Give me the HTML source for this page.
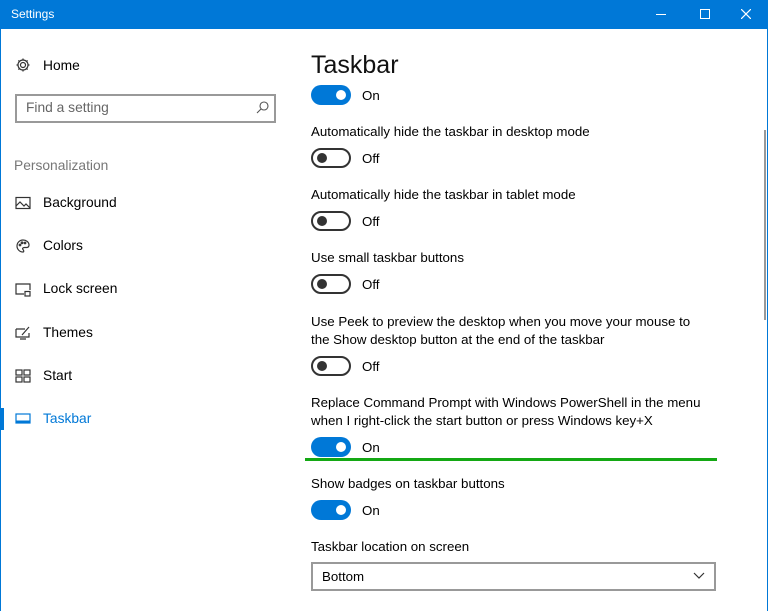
<!DOCTYPE html>
<html><head><style>
*{margin:0;padding:0;box-sizing:border-box}
body{width:768px;height:611px;background:#fff;font-family:"Liberation Sans",sans-serif;position:relative;overflow:hidden;color:#000}
.a{position:absolute;white-space:nowrap}
.t{font-size:13.3px;line-height:16px}
.tg{position:absolute;left:311px;width:40px;height:20px;border-radius:10px}
.on{background:#0078d7}
.on::after{content:"";position:absolute;right:5px;top:5px;width:10px;height:10px;border-radius:5px;background:#fff}
.off{border:2px solid #333}
.off::after{content:"";position:absolute;left:4px;top:3px;width:10px;height:10px;border-radius:5px;background:#333}
.lbl{left:362px;font-size:13.3px}
.nav{left:43px;font-size:13.8px}
.ic{position:absolute;left:15px}
</style></head><body>
<div class="a" style="left:0;top:0;width:768px;height:29px;background:#0078d7"></div>
<div class="a" style="left:11px;top:7px;color:#fff;font-size:12px">Settings</div>
<div class="a" style="left:656px;top:14px;width:10px;height:1px;background:#fff"></div>
<div class="a" style="left:700px;top:9px;width:10px;height:10px;border:1px solid #fff"></div>
<svg class="a" style="left:741px;top:9px" width="10" height="10" viewBox="0 0 10 10" stroke="#fff" stroke-width="1.2"><path d="M0 0l10 10M10 0L0 10"/></svg>
<div class="a" style="left:0;top:29px;width:1px;height:582px;background:#0078d7"></div>
<div class="a" style="left:767px;top:29px;width:1px;height:582px;background:#0078d7"></div>
<div class="a" style="left:764px;top:130px;width:2px;height:190px;background:#999"></div>

<svg class="ic" style="top:57px" width="16" height="16" viewBox="0 0 16 16" fill="none" stroke="#333" stroke-width="1.2"><circle cx="8" cy="8" r="2.5"/><path d="M8 1.5v2M8 12.5v2M1.5 8h2M12.5 8h2M3.4 3.4l1.4 1.4M11.2 11.2l1.4 1.4M3.4 12.6l1.4-1.4M11.2 4.8l1.4-1.4"/><circle cx="8" cy="8" r="5"/></svg>
<div class="a nav" style="top:58px">Home</div>
<div class="a" style="left:15px;top:94px;width:261px;height:29px;border:2px solid #999"></div>
<div class="a" style="left:26px;top:100px;font-size:13.8px;color:#666">Find a setting</div>
<svg class="a" style="left:256px;top:101px" width="13" height="13" viewBox="0 0 13 13" fill="none" stroke="#555" stroke-width="1.1"><circle cx="8" cy="5" r="4"/><path d="M5 8l-4 4"/></svg>
<div class="a" style="left:14px;top:158px;font-size:13.8px;color:#777">Personalization</div>

<svg class="ic" style="top:196px" width="16" height="14" viewBox="0 0 16 14" fill="none" stroke="#333" stroke-width="1.2"><rect x="1" y="1.5" width="14" height="11"/><path d="M1 10l4-4 4 4 2-2 4 4"/></svg>
<div class="a nav" style="top:195px">Background</div>
<svg class="ic" style="top:238px" width="16" height="16" viewBox="0 0 16 16" fill="none" stroke="#333" stroke-width="1.2"><path d="M8 2a6 6 0 1 0 0 12c1 0 1-1.5 0-2.5s0-2 1.5-2H12a2.5 2.5 0 0 0 2-2.5C14 4 11 2 8 2z"/><circle cx="5" cy="7" r=".8"/><circle cx="7" cy="4.8" r=".8"/><circle cx="10" cy="5" r=".8"/></svg>
<div class="a nav" style="top:238px">Colors</div>
<svg class="ic" style="top:283px" width="16" height="14" viewBox="0 0 16 14" fill="none" stroke="#333" stroke-width="1.2"><path d="M9 11H1V1h14v6"/><rect x="10" y="8.5" width="5" height="4.5"/></svg>
<div class="a nav" style="top:281px">Lock screen</div>
<svg class="ic" style="top:325px" width="16" height="16" viewBox="0 0 16 16" fill="none" stroke="#333" stroke-width="1.2"><path d="M1 4h9M1 4v8h13V8M5 14h6M7 10l7-8"/></svg>
<div class="a nav" style="top:325px">Themes</div>
<svg class="ic" style="top:369px" width="16" height="14" viewBox="0 0 16 14" fill="none" stroke="#333" stroke-width="1.2"><rect x="1" y="1" width="6" height="5"/><rect x="9" y="1" width="6" height="5"/><rect x="1" y="8" width="6" height="5"/><rect x="9" y="8" width="6" height="5"/></svg>
<div class="a nav" style="top:368px">Start</div>
<div class="a" style="left:0;top:408px;width:4px;height:22px;background:#0078d7"></div>
<svg class="ic" style="top:413px" width="16" height="12" viewBox="0 0 16 12" fill="none" stroke="#0078d7" stroke-width="1.2"><rect x="1" y="1" width="14" height="9"/><path d="M1 8.5h14" stroke-width="2"/></svg>
<div class="a nav" style="top:411px;color:#0078d7">Taskbar</div>

<div class="a" style="left:311px;top:50px;font-size:25px;line-height:30px;color:#111">Taskbar</div>
<div class="tg on" style="top:85px"></div><div class="a lbl" style="top:88px">On</div>
<div class="a t" style="left:311px;top:124px">Automatically hide the taskbar in desktop mode</div>
<div class="tg off" style="top:148px"></div><div class="a lbl" style="top:151px">Off</div>
<div class="a t" style="left:311px;top:187px">Automatically hide the taskbar in tablet mode</div>
<div class="tg off" style="top:211px"></div><div class="a lbl" style="top:214px">Off</div>
<div class="a t" style="left:311px;top:250px">Use small taskbar buttons</div>
<div class="tg off" style="top:274px"></div><div class="a lbl" style="top:277px">Off</div>
<div class="a t" style="left:311px;top:313px;line-height:18px">Use Peek to preview the desktop when you move your mouse to<br>the Show desktop button at the end of the taskbar</div>
<div class="tg off" style="top:356px"></div><div class="a lbl" style="top:359px">Off</div>
<div class="a t" style="left:311px;top:394px;line-height:18px">Replace Command Prompt with Windows PowerShell in the menu<br>when I right-click the start button or press Windows key+X</div>
<div class="tg on" style="top:437px"></div><div class="a lbl" style="top:440px">On</div>
<div class="a" style="left:305px;top:458px;width:412px;height:3px;background:#14a814"></div>
<div class="a t" style="left:311px;top:476px">Show badges on taskbar buttons</div>
<div class="tg on" style="top:500px"></div><div class="a lbl" style="top:503px">On</div>
<div class="a t" style="left:311px;top:539px">Taskbar location on screen</div>
<div class="a" style="left:311px;top:562px;width:405px;height:29px;border:2px solid #999"></div>
<div class="a t" style="left:322px;top:569px">Bottom</div>
<svg class="a" style="left:693px;top:572px" width="12" height="8" viewBox="0 0 12 8" fill="none" stroke="#333" stroke-width="1.2"><path d="M1 1l5 5 5-5"/></svg>
</body></html>
